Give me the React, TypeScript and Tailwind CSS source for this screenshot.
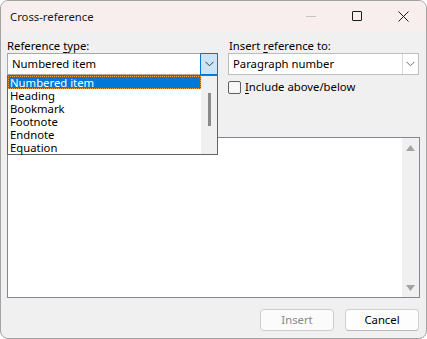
import React from "react";

const font = { fontFamily: '"Segoe UI", "Noto Sans", "Open Sans", sans-serif' };

function Chevron({ color = "#505050" }: { color?: string }) {
  return (
    <svg width="9" height="6" viewBox="0 0 9 6">
      <path d="M0.5 0.8 L4.5 4.8 L8.5 0.8" fill="none" stroke={color} strokeWidth="1" />
    </svg>
  );
}

export default function App() {
  const items = ["Numbered item", "Heading", "Bookmark", "Footnote", "Endnote", "Equation"];
  return (
    <div className="w-[427px] h-[339px] bg-white text-[11.3px] text-black" style={font}>
      <div className="w-[427px] h-[339px] border border-[#a3a3a3] rounded-[8px] overflow-hidden flex flex-col bg-[#f0f0f0]">
        {/* Title bar */}
        <div className="h-[30px] bg-[#f9eeee] flex items-center shrink-0">
          <div className="pl-[9px] pt-[2px] flex-1 leading-none text-[11.3px] text-[#1a1a1a]">Cross-reference</div>
          <div className="w-[46px] h-[30px] flex items-center justify-center">
            <div className="w-[10px] h-px bg-[#c4c4c4]" />
          </div>
          <div className="w-[46px] h-[30px] flex items-center justify-center">
            <div className="w-[10px] h-[10px] border border-[#1a1a1a] rounded-[1px]" />
          </div>
          <div className="w-[46px] h-[30px] flex items-center justify-center">
            <svg width="11" height="11" viewBox="0 0 11 11">
              <path d="M0.5 0.5 L10.5 10.5 M10.5 0.5 L0.5 10.5" stroke="#1a1a1a" strokeWidth="1" />
            </svg>
          </div>
        </div>

        {/* Body */}
        <div className="flex-1 flex flex-col pl-[6px] pr-[7px] pt-[7px]">
          <div className="flex gap-[10px]">
            {/* Left column */}
            <div className="w-[211px] relative">
              <div className="h-[15px] leading-[15px]">
                Reference <span className="underline underline-offset-2">t</span>ype:
              </div>
              <div className="h-[22px] border border-[#a8a8a8] bg-white flex">
                <div className="flex-1 pl-[4px] leading-[20px]">Numbered item</div>
                <div className="w-[18px] -my-px -mr-px border border-[#0078d7] bg-[#cce4f7] flex items-center justify-center">
                  <Chevron color="#3a3a3a" />
                </div>
              </div>
              {/* Dropdown list */}
              <div className="absolute left-0 top-[37px] w-[211px] h-[80px] border border-[#646464] bg-white flex z-10">
                <div className="flex-1 flex flex-col">
                  {items.map((it, i) => (
                    <div
                      key={it}
                      className={
                        i === 0
                          ? "h-[13px] leading-[13px] pl-[2px] bg-[#0078d7] text-white outline-1 outline-dotted outline-[#f0a040] -outline-offset-1"
                          : "h-[13px] leading-[13px] pl-[2px]"
                      }
                    >
                      {it}
                    </div>
                  ))}
                </div>
                <div className="w-[16px] bg-[#f0f0f0] flex justify-center pt-[17px]">
                  <div className="w-[3px] h-[33px] bg-[#8a8a8a]" />
                </div>
              </div>
            </div>

            {/* Right column */}
            <div className="w-[191px]">
              <div className="h-[15px] leading-[15px] pl-px">
                Insert <span className="underline underline-offset-2">r</span>eference to:
              </div>
              <div className="h-[22px] border border-[#bdbdbd] bg-white flex">
                <div className="flex-1 pl-[4px] leading-[20px]">Paragraph number</div>
                <div className="w-[16px] border-l border-[#d9d9d9] flex items-center justify-center">
                  <Chevron color="#707070" />
                </div>
              </div>
              <div className="flex items-center mt-[5px] h-[14px]">
                <div className="w-[13px] h-[13px] border border-[#5f5f5f] rounded-[2px] bg-[#f7f7f7]" />
                <div className="ml-[4px] leading-[14px]">
                  <span className="underline underline-offset-2">I</span>nclude above/below
                </div>
              </div>
            </div>
          </div>

          {/* Big list */}
          <div className="mt-[43px] h-[161px] w-[413px] border border-[#828790] bg-white flex">
            <div className="flex-1" />
            <div className="w-[17px] bg-[#f0f0f0] flex flex-col items-center justify-between pt-[7px] pb-[6px]">
              <svg width="9" height="6" viewBox="0 0 9 6">
                <path d="M4.5 0 L9 6 L0 6 Z" fill="#a3a3a3" />
              </svg>
              <svg width="9" height="6" viewBox="0 0 9 6">
                <path d="M0 0 L9 0 L4.5 6 Z" fill="#a3a3a3" />
              </svg>
            </div>
          </div>

          {/* Buttons */}
          <div className="flex justify-end gap-[11px] mt-[11px]">
            <div className="w-[74px] h-[22px] border border-[#cccccc] rounded-[4px] bg-[#fbfbfb] text-[#8a8a8a] flex items-center justify-center">
              Insert
            </div>
            <div className="w-[74px] h-[22px] border border-[#d0d0d0] border-b-[#b8b8b8] rounded-[4px] bg-[#fdfdfd] flex items-center justify-center">
              Cancel
            </div>
          </div>
        </div>
      </div>
    </div>
  );
}
